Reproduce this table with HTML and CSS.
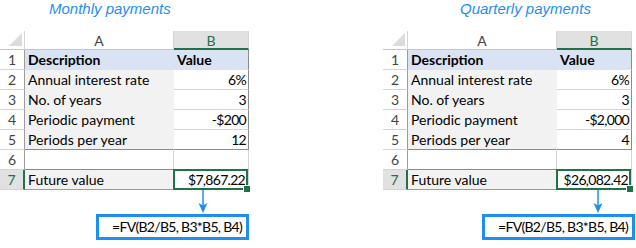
FILE: index.html
```html
<!DOCTYPE html>
<html>
<head>
<meta charset="utf-8">
<link rel="stylesheet" href="styles.css">
</head>
<body>
<div class="page">
  <section class="panel panel-left">
    <h2 class="title">Monthly payments</h2>
    <div class="sheet">
      <div class="corner"><span class="tri"></span></div><div class="colhead">A</div><div class="colhead sel">B</div>
      <div class="rowhead">1</div><div class="cell hdr">Description</div><div class="cell hdr val">Value</div>
      <div class="rowhead">2</div><div class="cell lbl">Annual interest rate</div><div class="cell num">6%</div>
      <div class="rowhead">3</div><div class="cell lbl">No. of years</div><div class="cell num">3</div>
      <div class="rowhead">4</div><div class="cell lbl">Periodic payment</div><div class="cell num">-$200</div>
      <div class="rowhead">5</div><div class="cell lbl last">Periods per year</div><div class="cell num last">12</div>
      <div class="rowhead">6</div><div class="cell blank"></div><div class="cell blank-b"></div>
      <div class="rowhead sel">7</div><div class="cell lbl total">Future value</div><div class="cell num active">$7,867.22</div>
    </div>
    <div class="arrow"><svg width="10" height="24" viewBox="0 0 10 24"><line x1="5" y1="0" x2="5" y2="16" stroke="#1f8ef1" stroke-width="1.5"/><path d="M0.5 13 L5 15.5 L9.5 13 L5 23 Z" fill="#1f8ef1"/></svg></div>
    <div class="formula">=FV(B2/B5, B3*B5, B4)</div>
  </section>
  <section class="panel panel-right">
    <h2 class="title">Quarterly payments</h2>
    <div class="sheet">
      <div class="corner"><span class="tri"></span></div><div class="colhead">A</div><div class="colhead sel">B</div>
      <div class="rowhead">1</div><div class="cell hdr">Description</div><div class="cell hdr val">Value</div>
      <div class="rowhead">2</div><div class="cell lbl">Annual interest rate</div><div class="cell num">6%</div>
      <div class="rowhead">3</div><div class="cell lbl">No. of years</div><div class="cell num">3</div>
      <div class="rowhead">4</div><div class="cell lbl">Periodic payment</div><div class="cell num">-$2,000</div>
      <div class="rowhead">5</div><div class="cell lbl last">Periods per year</div><div class="cell num last">4</div>
      <div class="rowhead">6</div><div class="cell blank"></div><div class="cell blank-b"></div>
      <div class="rowhead sel">7</div><div class="cell lbl total">Future value</div><div class="cell num active">$26,082.42</div>
    </div>
    <div class="arrow"><svg width="10" height="24" viewBox="0 0 10 24"><line x1="5" y1="0" x2="5" y2="16" stroke="#1f8ef1" stroke-width="1.5"/><path d="M0.5 13 L5 15.5 L9.5 13 L5 23 Z" fill="#1f8ef1"/></svg></div>
    <div class="formula">=FV(B2/B5, B3*B5, B4)</div>
  </section>
</div>
</body>
</html>
```

FILE: styles.css
```css
* { box-sizing: border-box; }
html, body { margin: 0; padding: 0; background: #fff; }
body { width: 636px; height: 248px; overflow: hidden; font-family: "Lato", "Liberation Sans", sans-serif; }

.page { display: flex; }
.panel { flex: none; display: flex; flex-direction: column; }
.panel-left { width: 383px; }
.panel-right { width: 253px; }

.title {
  margin: 0;
  height: 31px;
  font-family: "Liberation Sans", Arial, sans-serif;
  font-style: italic;
  font-weight: normal;
  font-size: 15px;
  line-height: 18px;
  color: #1f8ef1;
}
.panel-left .title { padding-left: 49px; }
.panel-right .title { padding-left: 77px; }

.sheet {
  display: grid;
  grid-template-columns: 25px 149px 75px;
  grid-template-rows: 19px repeat(7, 20px);
  width: 249px;
  font-size: 14px;
  line-height: 20px;
  color: #000;
}
.sheet > div { border-right: 1px solid #d4d4d4; border-bottom: 1px solid #d4d4d4; white-space: nowrap; overflow: visible; }

.corner { position: relative; border-bottom-color: #c6c6c6 !important; }
.tri {
  position: absolute; right: 2px; bottom: 3px; width: 13px; height: 13px;
  background: #dcdcdc;
  clip-path: polygon(100% 0, 100% 100%, 0 100%);
}
.colhead { text-align: center; color: #444; line-height: 19px; border-bottom-color: #c6c6c6 !important; }
.colhead.sel { background: #e1e1e1; color: #217346; border-bottom: 2px solid #217346 !important; line-height: 19px; }

.rowhead { text-align: center; color: #444; border-right-color: #9c9c9c !important; }
.rowhead.sel { background: #e1e1e1; color: #217346; border-right: 2px solid #217346 !important; }

.cell { padding: 0 2px 0 3px; }
.hdr { background: #dae3f3; font-weight: bold; border-bottom-color: #dae3f3 !important; border-right-color: #dae3f3 !important; }
.hdr.val { border-right-color: #8a8a8a !important; }
.lbl { background: #f2f2f2; border-bottom-color: #f2f2f2 !important; border-right-color: #f2f2f2 !important; }
.num { text-align: right; letter-spacing: -0.7px; border-right-color: #8a8a8a !important; }
.last { border-bottom-color: #8a8a8a !important; }
.blank { border-bottom-color: #8a8a8a !important; }
.blank-b { border-bottom-color: #8a8a8a !important; }
.lbl.total { border-bottom-color: #9c9c9c !important; border-right-color: #d4d4d4 !important; }
.num.active { position: relative; border-right-color: #d4d4d4 !important; padding-right: 3px; }
.num.active::after {
  content: ""; position: absolute; left: -1px; top: -1px; right: 0; bottom: -1px;
  border: 2px solid #217346;
}
.num.active::before {
  content: ""; position: absolute; right: -3px; bottom: -4px; width: 6px; height: 6px;
  background: #217346; border: 1px solid #fff; z-index: 1;
}

.arrow { height: 24px; }
.arrow svg { display: block; }
.panel-left .arrow { margin-left: 198px; }
.panel-right .arrow { margin-left: 210px; }

.formula {
  width: 153px;
  height: 26px;
  border: 3px solid #1f8ef1;
  font-size: 14px;
  line-height: 20px;
  letter-spacing: -0.7px;
  text-align: right;
  padding-right: 4px;
  white-space: nowrap;
  color: #000;
}
.panel-left .formula { margin-left: 96px; }
.panel-right .formula { margin-left: 99px; }
```
